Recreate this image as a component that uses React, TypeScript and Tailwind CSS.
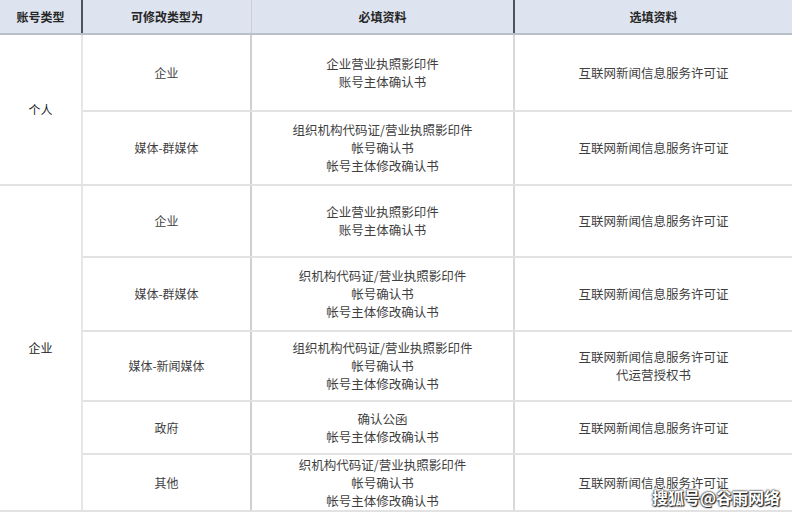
import React from "react";

type SubRow = {
  target: string;
  required: string[];
  optional: string[];
  h: string;
};

const groups: { type: string; rows: SubRow[] }[] = [
  {
    type: "个人",
    rows: [
      {
        target: "企业",
        required: ["企业营业执照影印件", "账号主体确认书"],
        optional: ["互联网新闻信息服务许可证"],
        h: "h-[77px]",
      },
      {
        target: "媒体-群媒体",
        required: ["组织机构代码证/营业执照影印件", "帐号确认书", "帐号主体修改确认书"],
        optional: ["互联网新闻信息服务许可证"],
        h: "h-[72px]",
      },
    ],
  },
  {
    type: "企业",
    rows: [
      {
        target: "企业",
        required: ["企业营业执照影印件", "账号主体确认书"],
        optional: ["互联网新闻信息服务许可证"],
        h: "h-[72px]",
      },
      {
        target: "媒体-群媒体",
        required: ["织机构代码证/营业执照影印件", "帐号确认书", "帐号主体修改确认书"],
        optional: ["互联网新闻信息服务许可证"],
        h: "h-[74px]",
      },
      {
        target: "媒体-新闻媒体",
        required: ["组织机构代码证/营业执照影印件", "帐号确认书", "帐号主体修改确认书"],
        optional: ["互联网新闻信息服务许可证", "代运营授权书"],
        h: "h-[70px]",
      },
      {
        target: "政府",
        required: ["确认公函", "帐号主体修改确认书"],
        optional: ["互联网新闻信息服务许可证"],
        h: "h-[53px]",
      },
      {
        target: "其他",
        required: ["织机构代码证/营业执照影印件", "帐号确认书", "帐号主体修改确认书"],
        optional: ["互联网新闻信息服务许可证"],
        h: "h-[55px]",
      },
    ],
  },
];

function Lines({ items }: { items: string[] }) {
  return (
    <div className="flex flex-col items-center leading-[18px]">
      {items.map((t) => (
        <span key={t}>{t}</span>
      ))}
    </div>
  );
}

export default function App() {
  return (
    <div
      className="relative h-[513px] w-[792px] overflow-hidden bg-white text-[12.5px] text-[#3f3f3f]"
      style={{ fontFamily: '"Noto Sans CJK SC", sans-serif' }}
    >
      {/* header */}
      <div className="flex h-[35px] border-b-2 border-[#b9bec8] bg-[#dde3ef] text-[12px] font-bold text-[#262626]">
        <div className="flex w-[83px] items-center justify-center border-r-2 border-[#4b5262]">
          账号类型
        </div>
        <div className="flex w-[169px] items-center justify-center border-r border-[#c9ced8]">
          可修改类型为
        </div>
        <div className="flex w-[263px] items-center justify-center border-r-2 border-[#4b5262]">
          必填资料
        </div>
        <div className="flex flex-1 items-center justify-center">选填资料</div>
      </div>

      {/* body */}
      {groups.map((g) => (
        <div key={g.type} className="flex border-b-2 border-[#e2e2e2] last:border-b-[3px] last:border-[#bdbdbd]">
          <div className="flex w-[83px] items-center justify-center border-r-2 border-[#e6e6e6] text-[12px] text-[#222]">
            {g.type}
          </div>
          <div className="flex flex-1 flex-col">
            {g.rows.map((r, i) => (
              <div
                key={i}
                className={`flex ${r.h} ${i < g.rows.length - 1 ? "border-b-2 border-[#e2e2e2]" : ""}`}
              >
                <div className="flex w-[169px] items-center justify-center border-r-2 border-[#cfcfcf] text-[12px]">
                  {r.target}
                </div>
                <div className="flex w-[263px] items-center justify-center border-r-2 border-[#d9d9d9]">
                  <Lines items={r.required} />
                </div>
                <div className="flex flex-1 items-center justify-center">
                  <Lines items={r.optional} />
                </div>
              </div>
            ))}
          </div>
        </div>
      ))}

      {/* watermark */}
      <div
        className="absolute bottom-[6px] right-[12px] text-[16px] font-bold leading-[20px] text-white"
        style={{ textShadow: "0 0 2px #222, 0 0 2px #222, 1px 1px 1px #222" }}
      >
        搜狐号@谷雨网络
      </div>
    </div>
  );
}
